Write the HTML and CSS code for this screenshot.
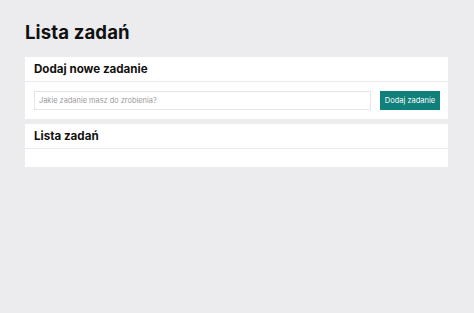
FILE: index.html
```html
<!DOCTYPE html>
<html lang="pl">
<head>
<meta charset="utf-8">
<title>Lista zadań</title>
<link rel="stylesheet" href="styles.css">
</head>
<body>
<main class="app">
  <h1 class="title">Lista zadań</h1>
  <section class="card">
    <h2 class="card-header">Dodaj nowe zadanie</h2>
    <form class="card-body form">
      <input class="input" type="text" placeholder="Jakie zadanie masz do zrobienia?">
      <button class="button" type="button">Dodaj zadanie</button>
    </form>
  </section>
  <section class="card">
    <h2 class="card-header">Lista zadań</h2>
    <div class="card-body list"></div>
  </section>
</main>
</body>
</html>
```

FILE: styles.css
```css
* { box-sizing: border-box; }
html, body { margin: 0; padding: 0; }
body {
  background: #ececee;
  font-family: "Inter", "DejaVu Sans", sans-serif;
  color: #111;
  width: 474px;
  height: 313px;
  overflow: hidden;
}
.app {
  padding: 20px 26px 0 25px;
}
.title {
  margin: 0 0 13px;
  font-size: 18.6px;
  line-height: 24px;
  font-weight: 700;
  letter-spacing: 0.1px;
}
.card {
  background: #fff;
  margin-bottom: 5px;
}
.card-header {
  margin: 0;
  height: 25px;
  padding: 0 9px;
  font-size: 11.6px;
  font-weight: 700;
  line-height: 24px;
  border-bottom: 1px solid #eaeaec;
}
.form {
  display: flex;
  gap: 9px;
  padding: 9px 8px 9px 9px;
}
.input {
  flex: 1;
  height: 19px;
  border: 1px solid #e6e6e8;
  padding: 0 4px;
  font-family: inherit;
  font-size: 7.4px;
  color: #333;
  outline: none;
}
.input::placeholder { color: #9a9a9c; }
.button {
  height: 19px;
  width: 60px;
  border: 0;
  padding: 0;
  background: #0f807a;
  color: #fff;
  font-family: inherit;
  font-size: 7.5px;
}
.list {
  height: 18px;
}
```
